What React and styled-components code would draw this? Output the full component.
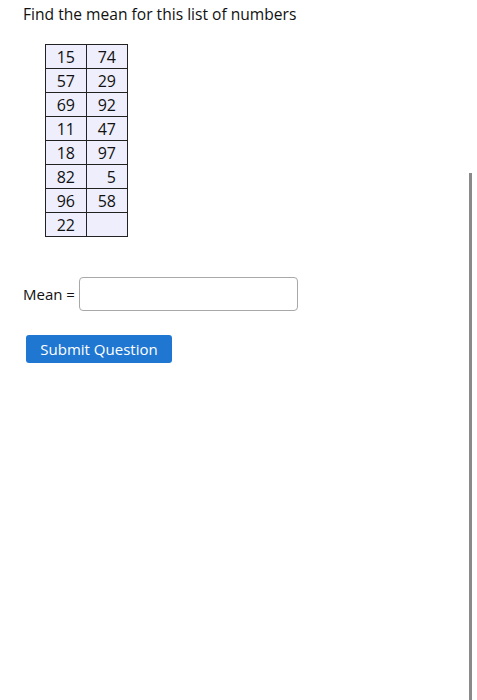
import styled, { createGlobalStyle } from 'styled-components';

const numbers = [
  [15, 74],
  [57, 29],
  [69, 92],
  [11, 47],
  [18, 97],
  [82, 5],
  [96, 58],
  [22, ''],
];

const GlobalStyle = createGlobalStyle`
  html, body {
    margin: 0;
    padding: 0;
    background: #fff;
  }
  body {
    font-family: "Open Sans", "DejaVu Sans", sans-serif;
    color: #111;
  }
`;

const Page = styled.main`
  position: relative;
  width: 477px;
  height: 700px;
  overflow: hidden;
  padding: 3px 0 0 23px;
  box-sizing: border-box;
`;

const Prompt = styled.p`
  margin: 0;
  font-size: 15.6px;
  line-height: 22px;
`;

const NumberTable = styled.table`
  margin: 19px 0 0 22px;
  border-collapse: collapse;
  border: 1px solid #222;
`;

const Cell = styled.td`
  width: 41px;
  height: 24px;
  box-sizing: border-box;
  padding: 0 11px 0 0;
  border: 1px solid #222;
  background: #eeeefc;
  text-align: right;
  font-size: 16px;
  line-height: 20px;
`;

const AnswerRow = styled.div`
  display: flex;
  align-items: center;
  gap: 4px;
  margin-top: 40px;
`;

const Label = styled.span`
  font-size: 15px;
`;

const AnswerInput = styled.input`
  width: 219px;
  height: 34px;
  box-sizing: border-box;
  border: 1px solid #a8a8a8;
  border-radius: 4px;
  background: #fff;
  font-size: 15px;
`;

const SubmitButton = styled.button`
  display: block;
  margin: 24px 0 0 3px;
  width: 146px;
  height: 28px;
  border: none;
  border-radius: 3px;
  background: #1f77d2;
  color: #fff;
  font-family: inherit;
  font-size: 15px;
  padding: 0;
`;

const ScrollEdge = styled.div`
  position: absolute;
  left: 469px;
  top: 173px;
  bottom: 0;
  width: 3px;
  background: #8a8a8a;
`;

export default function App() {
  return (
    <>
      <GlobalStyle />
      <Page>
        <Prompt>Find the mean for this list of numbers</Prompt>
        <NumberTable>
          <tbody>
            {numbers.map((row, i) => (
              <tr key={i}>
                {row.map((n, j) => (
                  <Cell key={j}>{n}</Cell>
                ))}
              </tr>
            ))}
          </tbody>
        </NumberTable>
        <AnswerRow>
          <Label>Mean =</Label>
          <AnswerInput type="text" />
        </AnswerRow>
        <SubmitButton>Submit Question</SubmitButton>
        <ScrollEdge />
      </Page>
    </>
  );
}
